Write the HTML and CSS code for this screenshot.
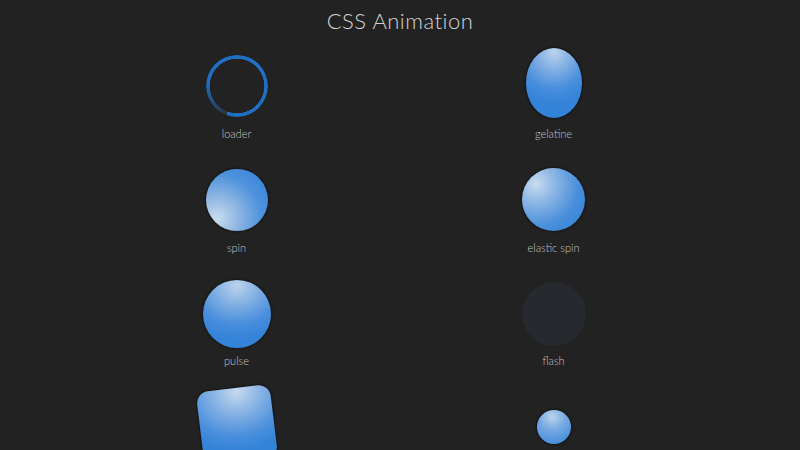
FILE: index.html
```html
<!DOCTYPE html>
<html>
<head>
<meta charset="utf-8">
<link rel="stylesheet" href="styles.css">
</head>
<body>
<h1 class="title">CSS Animation</h1>
<div class="grid">
  <div class="cell"><div class="stage"><div class="loader"></div></div><div class="label">loader</div></div>
  <div class="cell"><div class="stage"><div class="ball gelatine"></div></div><div class="label">gelatine</div></div>
  <div class="cell"><div class="stage"><div class="ball spin"></div></div><div class="label">spin</div></div>
  <div class="cell"><div class="stage"><div class="ball elastic"></div></div><div class="label">elastic spin</div></div>
  <div class="cell"><div class="stage"><div class="ball pulse"></div></div><div class="label">pulse</div></div>
  <div class="cell"><div class="stage"><div class="flash"></div></div><div class="label">flash</div></div>
  <div class="cell"><div class="stage"><div class="ball square"></div></div></div>
  <div class="cell"><div class="stage"><div class="ball small"></div></div></div>
</div>
</body>
</html>
```
FILE: styles.css
```css
html, body {
  margin: 0;
  padding: 0;
  background: #222222;
  overflow: hidden;
  height: 450px;
}
body {
  font-family: Lato, "Open Sans", sans-serif;
  color: #cfcfcf;
}
.title {
  margin: 0;
  height: 42px;
  line-height: 42px;
  text-align: center;
  font-size: 22px;
  font-weight: 300;
  color: #d4d4d4;
  letter-spacing: 0.5px;
}
.grid {
  display: grid;
  grid-template-columns: 317px 317px;
  margin-left: 78px;
  row-gap: 13.5px;
}
.cell {
  display: flex;
  flex-direction: column;
  align-items: center;
}
.stage {
  height: 88px;
  width: 100%;
  display: flex;
  align-items: center;
  justify-content: center;
}
.label {
  height: 16px;
  line-height: 16px;
  margin-top: -4px;
  font-size: 11px;
  font-weight: 300;
  color: #c4c4c4;
}
.loader {
  width: 62px;
  height: 62px;
  border-radius: 50%;
  background: conic-gradient(from 200deg, #2a3442 0deg, #1f6fc2 80deg, #1f6fc2 360deg);
  -webkit-mask: radial-gradient(circle, transparent 27px, #000 27.5px, #000 31px, transparent 31.5px);
  mask: radial-gradient(circle, transparent 27px, #000 27.5px, #000 31px, transparent 31.5px);
}
.ball {
  border-radius: 50%;
  box-shadow: 0 0 2px 1px #151515;
}
.gelatine {
  width: 56px;
  height: 70px;
  margin-top: -6px;
  background: radial-gradient(ellipse 85% 75% at 50% 5%, #bcd3ec 0%, #82b0e3 35%, #4a8fdc 70%, #3383d8 100%);
}
.spin {
  width: 62px;
  height: 62px;
  background: radial-gradient(circle at 18% 80%, #cadcef 0%, #8fb7e3 30%, #4f92dc 62%, #2f7fd7 100%);
}
.elastic {
  width: 63px;
  height: 63px;
  background: radial-gradient(circle at 22% 25%, #c8dbef 0%, #8db6e4 28%, #4a8fdb 62%, #2f7fd7 100%);
}
.pulse {
  width: 68px;
  height: 68px;
  margin-top: 2px;
  background: radial-gradient(ellipse 90% 80% at 50% 8%, #bcd3ec 0%, #82b0e3 35%, #4a8fdc 70%, #3383d8 100%);
}
.flash {
  width: 64px;
  height: 64px;
  border-radius: 50%;
  margin-top: 2px;
  background: #26292d;
}
.square {
  width: 74px;
  height: 74px;
  border-radius: 12px;
  margin-top: -4px;
  transform: rotate(-7deg);
  background: radial-gradient(ellipse 90% 80% at 55% 5%, #c6daef 0%, #8ab4e4 35%, #4a8fdc 75%, #3383d8 100%);
}
.small {
  width: 34px;
  height: 34px;
  background: radial-gradient(circle at 45% 20%, #bcd3ec 0%, #76a9e2 40%, #3383d8 100%);
}
```
